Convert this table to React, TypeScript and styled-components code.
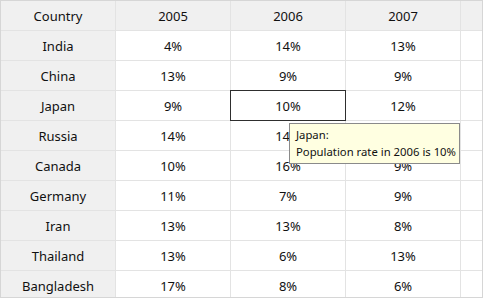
import React from "react";
import styled, { createGlobalStyle } from "styled-components";

const GlobalStyle = createGlobalStyle`
  html, body { margin: 0; padding: 0; background: #ffffff; }
  body { font-family: "Noto Sans", "Open Sans", sans-serif; }
`;

const Grid = styled.div`
  position: relative;
  box-sizing: border-box;
  width: 483px;
  height: 298px;
  border: 1px solid #d6d6d6;
  overflow: hidden;
  display: grid;
  grid-template-columns: 115px 115px 115px 115px 21px;
  grid-auto-rows: 30px;
  font-size: 13px;
  color: #111111;
`;

const Cell = styled.div<{ $head?: boolean; $last?: boolean }>`
  box-sizing: border-box;
  position: relative;
  display: flex;
  align-items: center;
  justify-content: center;
  border-right: ${(p) => (p.$last ? "none" : "1px solid #e3e3e3")};
  border-bottom: 1px solid #e3e3e3;
  background: ${(p) => (p.$head ? "#f0f0f0" : "#ffffff")};
  white-space: nowrap;
`;

const SelectedCell = styled(Cell)`
  &::after {
    content: "";
    position: absolute;
    top: -1px;
    left: -1px;
    right: -1px;
    bottom: -1px;
    border: 1px solid #2e2e2e;
    pointer-events: none;
  }
`;

const Tooltip = styled.div`
  position: absolute;
  left: 288px;
  top: 122px;
  box-sizing: border-box;
  width: 171px;
  padding: 2px 4px 3px 6px;
  background: #ffffe1;
  border: 1px solid #8a8a8a;
  font-size: 11.3px;
  line-height: 17px;
  color: #111111;
  white-space: nowrap;
  z-index: 2;
`;

const data: [string, string, string, string][] = [
  ["India", "4%", "14%", "13%"],
  ["China", "13%", "9%", "9%"],
  ["Japan", "9%", "10%", "12%"],
  ["Russia", "14%", "14%", "11%"],
  ["Canada", "10%", "16%", "9%"],
  ["Germany", "11%", "7%", "9%"],
  ["Iran", "13%", "13%", "8%"],
  ["Thailand", "13%", "6%", "13%"],
  ["Bangladesh", "17%", "8%", "6%"],
];

export default function App() {
  return (
    <>
      <GlobalStyle />
      <Grid>
        <Cell $head>Country</Cell>
        <Cell $head>2005</Cell>
        <Cell $head>2006</Cell>
        <Cell $head>2007</Cell>
        <Cell $head $last />
        {data.map((r, i) => (
          <React.Fragment key={r[0]}>
            <Cell $head>{r[0]}</Cell>
            <Cell>{r[1]}</Cell>
            {i === 2 ? <SelectedCell>{r[2]}</SelectedCell> : <Cell>{r[2]}</Cell>}
            <Cell>{r[3]}</Cell>
            <Cell $last />
          </React.Fragment>
        ))}
        <Tooltip>
          Japan:
          <br />
          Population rate in 2006 is 10%
        </Tooltip>
      </Grid>
    </>
  );
}
